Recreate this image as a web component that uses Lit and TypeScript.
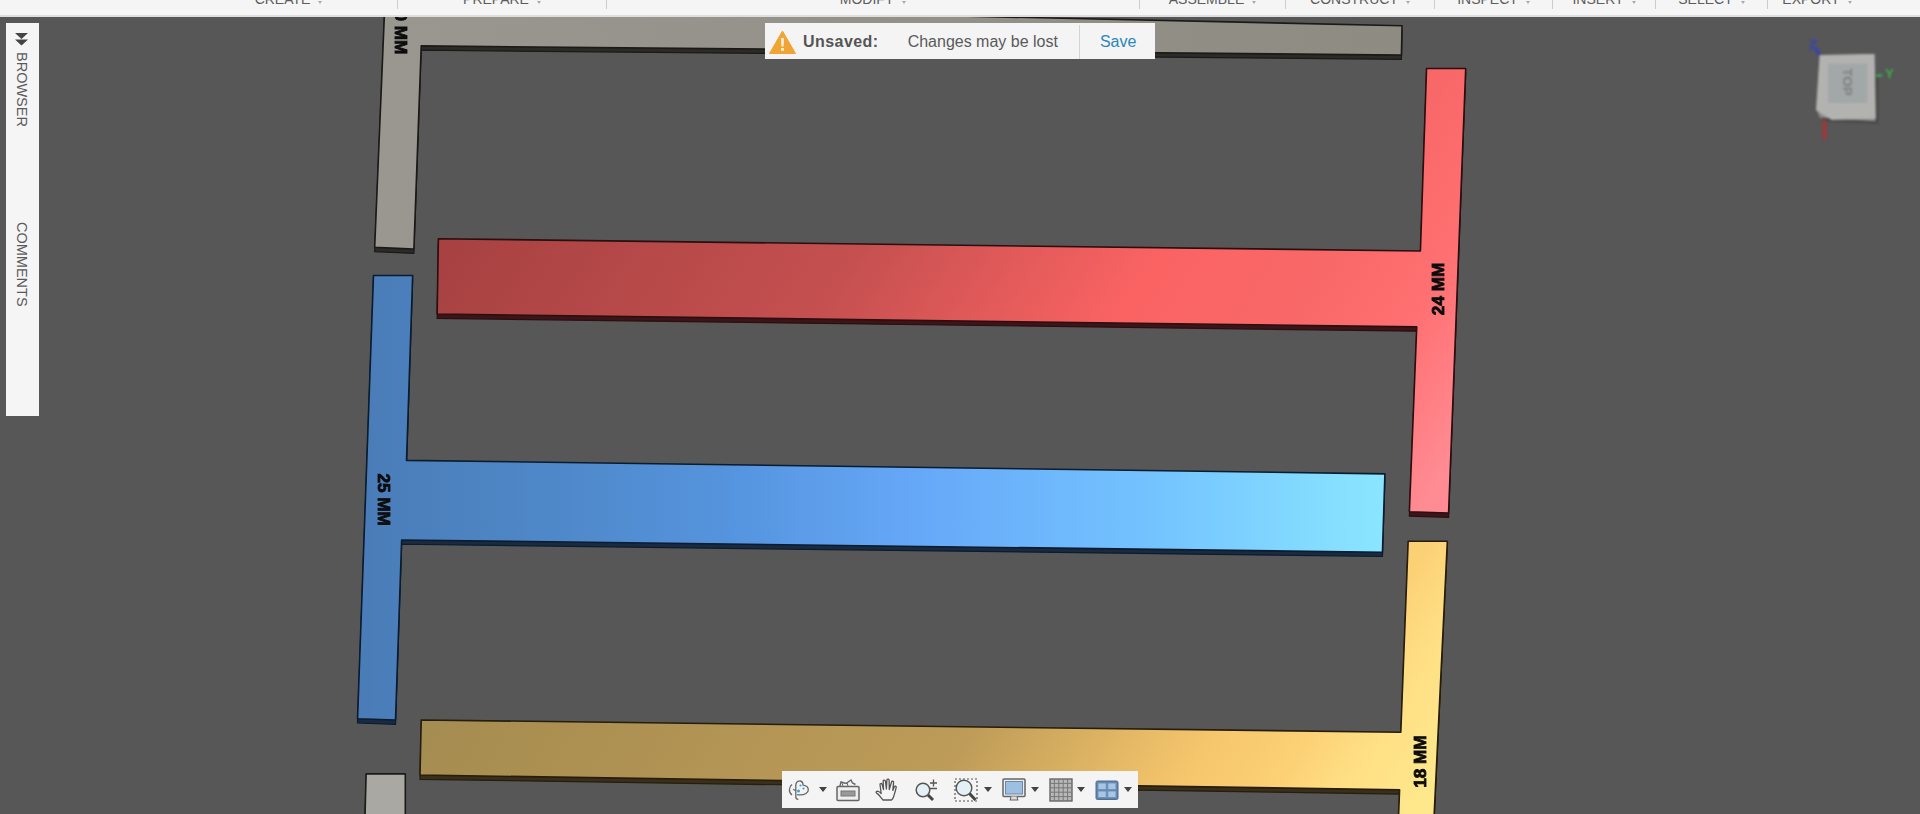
import { LitElement, html, css, svg } from "lit";
import { customElement } from "lit/decorators.js";

const MENUS = [
  { label: "CREATE", w: 218 },
  { label: "PREPARE", w: 209 },
  { label: "MODIFY", w: 533 },
  { label: "ASSEMBLE", w: 146 },
  { label: "CONSTRUCT", w: 149 },
  { label: "INSPECT", w: 118 },
  { label: "INSERT", w: 103 },
  { label: "SELECT", w: 112 },
  { label: "EXPORT", w: 98 },
];

const BARS = [
  { pts: "314,10 640,10 1145,21 1144.5,45 344,37.5 338,203.5 306,202", fill: "url(#gGrey)", edge: "#1b1a18", under: "#2c2b28" },
  { pts: "1165,56 1197,56 1183,419 1151,418 1157,267 357,256.5 358,195 1160,205", fill: "url(#gRed)", edge: "#2c0e10", under: "#3c1519" },
  { pts: "305,225 337,225 332,376 1131,387 1129,451 328,441 323,588 292,587", fill: "url(#gBlue)", edge: "#0b1c30", under: "#1a2b40" },
  { pts: "1150,442 1182,442 1171,670 1142,670 1143,645 343,633 344,588 1144,598", fill: "url(#gYellow)", edge: "#261d0c", under: "#3a2f1b" },
  { pts: "299,632 331,632 331,670 298,670", fill: "#aaa8a2", edge: "#1b1a18", under: "#2c2b28" },
];

const LABELS = [
  { t: "20 MM", x: 327.5, y: 23, r: 90 },
  { t: "24 MM", x: 1174, y: 236, r: -90 },
  { t: "25 MM", x: 314, y: 408, r: 90 },
  { t: "18 MM", x: 1159.5, y: 622, r: -90 },
];

const ICON_ORBIT = html`<svg class="ic" viewBox="0 0 24 24" fill="none" stroke="#666" stroke-width="1.3">
  <path d="M5 6.5C1.6 9 1.4 14.6 5 17" />
  <path d="M12.5 3c3 0 3.6 2.4 3.6 4.2 2.9.4 5.2 2.3 5.2 4.7 0 2.8-3.6 5-8.2 5-1 0-2-.1-3-.3" />
  <path d="M12.5 3C10 3 8.800 5 8.800 7.500v11.200c0 1.700 1.200 2.600 2.600 2.600" />
  <path d="M8.800 12.500c-1.200-.2-2-.7-2.500-1.300" />
  <circle cx="13.500" cy="7.500" r="1.100" fill="#3d9fd6" stroke="none" />
  <circle cx="16.500" cy="10.500" r="1.100" fill="#3d9fd6" stroke="none" />
  <circle cx="11.500" cy="13" r="1.500" fill="#3d9fd6" stroke="none" />
</svg>`;

const ICON_LOOK = html`<svg class="ic" viewBox="0 0 24 24" fill="none" stroke="#666" stroke-width="1.5">
  <rect x="1" y="8.500" width="22" height="14" rx="1" fill="#eee" />
  <rect x="5" y="13" width="14" height="5" fill="#999" stroke="#777" stroke-width="1" />
  <path d="M4 8l1-4 5 1.500 5-3.500 1.500 3 3 1.500" stroke-width="1.400" />
  <path d="M6 5l1 3M11 4.500l1 3.500" stroke-width="1" />
</svg>`;

const ICON_HAND = html`<svg class="ic" viewBox="0 0 24 24" fill="#f6f6f6" stroke="#555" stroke-width="1.300" stroke-linejoin="round">
  <path d="M8 22c-1.600-1.800-3-3.800-4.300-5.200-1-1-2.500-1.600-2.600-2.600 0-1 1.400-1.200 2.500-.7 1 .5 2 1.400 2.600 2.100L5 6.500c-.2-1 1.600-1.500 2-.4l1.500 5.500L8.200 3c0-1.300 2-1.300 2.200 0l1 8 .5-9c.1-1.200 2.100-1.200 2.200 0l.2 9.500L16.500 4c.3-1.200 2.200-.9 2.100.4l-.8 8 1.500-3.700c.5-1 2.200-.5 1.900.7-.6 3.100-1.800 6.600-2.700 9.600-.4 1.500-1 2.200-2 3z" />
</svg>`;

const ICON_ZOOM = html`<svg class="ic z" viewBox="0 0 25 24" fill="none" stroke="#555">
  <circle cx="9" cy="12" r="6.800" fill="#e4f0f6" stroke-width="1.500" />
  <path d="M14 17l5 5" stroke-width="3" stroke="#444" />
  <path d="M16 5h7M19.500 1.500v7M16 10.500h7" stroke-width="1.300" stroke="#555" />
</svg>`;

const ICON_FIT = html`<svg class="ic" viewBox="0 0 24 24" fill="none" stroke="#555">
  <rect x="1" y="1" width="22" height="22" stroke-dasharray="2 2" stroke-width="1.200" />
  <circle cx="10" cy="10" r="7.800" fill="#e4f0f6" stroke-width="1.400" />
  <path d="M15.500 15.500l6 6.500" stroke-width="3" stroke="#444" />
</svg>`;

const ICON_DISPLAY = html`<svg class="ic" viewBox="0 0 24 24" fill="none" stroke="#666">
  <rect x="1" y="1" width="22" height="17.500" rx="1" fill="#eee" stroke-width="1.500" />
  <rect x="3.500" y="3.500" width="17" height="12.500" fill="#9cbfe2" stroke="#6f8aa6" stroke-width="1" />
  <path d="M9 18.500l-.8 3.500h7.600L15 18.500" fill="#ddd" stroke-width="1.100" />
</svg>`;

const ICON_GRID = html`<svg class="ic" viewBox="0 0 24 24" fill="#b8b8b8" stroke="#666">
  <rect x="1" y="1" width="22" height="22" stroke-width="1.400" />
  <path d="M5.400 1v22M9.800 1v22M14.200 1v22M18.600 1v22M1 5.400h22M1 9.800h22M1 14.200h22M1 18.600h22" stroke-width="1" fill="none" stroke="#777" />
</svg>`;

const ICON_VIEWS = html`<svg class="ic" viewBox="0 0 24 24" fill="#a8c6e4" stroke="#6f93b8" stroke-width="1">
  <rect x="1" y="3" width="22" height="18.500" rx="1.500" fill="#5f82a8" stroke="#4f6f92" />
  <rect x="3" y="5" width="8.200" height="6.500" />
  <rect x="12.800" y="5" width="8.200" height="6.500" />
  <rect x="3" y="13" width="8.200" height="6.500" />
  <rect x="12.800" y="13" width="8.200" height="6.500" />
</svg>`;

const ARROW = html`<svg class="arrow" viewBox="0 0 8 5"><path d="M0 0h8L4 5z" fill="#444" /></svg>`;

@customElement("app-root")
export class AppRoot extends LitElement {
  static styles = css`
    :host {
      display: flex;
      flex-direction: column;
      width: 1920px;
      height: 814px;
      overflow: hidden;
      font-family: "Liberation Sans", Arial, sans-serif;
      color: #555;
    }
    .menubar {
      flex: 0 0 15px;
      display: flex;
      padding-left: 180px;
      background: #f5f5f5;
      border-bottom: 2px solid #dedede;
      overflow: hidden;
    }
    .menu {
      display: flex;
      justify-content: center;
      gap: 8px;
      height: 9px;
      border-right: 1px solid #ccc;
      box-sizing: border-box;
      font-size: 14px;
      line-height: 14px;
    }
    .menu:last-child {
      border-right: 0;
    }
    .menu span {
      margin-top: -8px;
      color: #5c5c5c;
    }
    .menu i {
      display: block;
      width: 0;
      height: 0;
      margin-top: 1px;
      border: 2.5px solid transparent;
      border-top: 3px solid #aaa;
    }
    .stage {
      flex: 1;
      position: relative;
      overflow: hidden;
      background: #565756;
    }
    .scene {
      display: block;
      width: 100%;
      height: 100%;
      filter: blur(0.5px);
    }
    .tag {
      font: bold 14px "Liberation Sans", Arial, sans-serif;
      fill: #0c0c0c;
      stroke: #0c0c0c;
      stroke-width: 0.7px;
      text-anchor: middle;
      dominant-baseline: central;
    }
    .cube {
      filter: blur(0.9px);
    }
    .cube text {
      font: bold 11px "Liberation Sans", Arial, sans-serif;
      text-anchor: middle;
      dominant-baseline: central;
    }
    .side {
      position: absolute;
      left: 6px;
      top: 6px;
      width: 33px;
      height: 393px;
      box-sizing: border-box;
      background: #f5f5f5;
      display: flex;
      flex-direction: column;
      align-items: center;
      padding: 10px 2px 0 0;
      font-size: 14.5px;
      color: #5a5a5a;
    }
    .side svg {
      width: 13px;
      height: 13px;
      margin-bottom: 6px;
    }
    .side span {
      writing-mode: vertical-rl;
      line-height: 15px;
    }
    .side .comments {
      margin-top: 95px;
    }
    .notice {
      position: absolute;
      left: 765px;
      top: 6px;
      width: 390px;
      height: 36px;
      box-sizing: border-box;
      background: #f4f4f4;
      display: flex;
      align-items: center;
      padding: 1px 0 0 4px;
      font-size: 16px;
      color: #5a5a5a;
    }
    .notice svg {
      width: 27px;
      height: 24px;
      flex: none;
    }
    .notice b {
      margin-left: 7px;
      letter-spacing: 0.45px;
      color: #555;
    }
    .notice .msg {
      margin-left: 29px;
    }
    .notice .save {
      margin-left: 21px;
      padding-left: 20px;
      height: 34px;
      line-height: 34px;
      border-left: 1px solid #d4d4d4;
      color: #2d86b9;
    }
    .nav {
      position: absolute;
      left: 782px;
      bottom: 6px;
      width: 356px;
      height: 37px;
      box-sizing: border-box;
      background: #f4f4f4;
      display: flex;
      align-items: center;
      padding-left: 5px;
    }
    .ic {
      width: 24px;
      height: 24px;
      flex: none;
    }
    .ic.z {
      width: 25px;
    }
    .arrow {
      width: 8px;
      height: 5px;
      flex: none;
    }
    .pair {
      display: flex;
      align-items: center;
      gap: 4px;
      margin-left: 10px;
    }
    .pair.first {
      margin-left: 0;
      gap: 8px;
    }
    .pair.look {
      margin-left: 9px;
    }
    .pair.solo {
      margin-left: 15px;
    }
    .pair.fit {
      margin-left: 15px;
      gap: 6px;
    }
    .pair.disp {
      gap: 5px;
    }
  `;

  render() {
    return html`
      <div class="menubar">
        ${MENUS.map(
          (m) => html`<div class="menu" style="width:${m.w}px"><span>${m.label}</span><i></i></div>`
        )}
      </div>
      <div class="stage">
        <svg class="scene" viewBox="0 13.900 1568 650.900" preserveAspectRatio="none">
          <defs>
            <linearGradient id="gGrey" gradientUnits="userSpaceOnUse" x1="310" y1="100" x2="1145" y2="30">
              <stop offset="0" stop-color="#9a9790" />
              <stop offset="1" stop-color="#8e8b83" />
            </linearGradient>
            <linearGradient id="gRed" gradientUnits="userSpaceOnUse" x1="358" y1="226" x2="1158" y2="726">
              <stop offset="0" stop-color="#a84242" />
              <stop offset="0.3" stop-color="#c65050" />
              <stop offset="0.52" stop-color="#fb6363" />
              <stop offset="0.645" stop-color="#f96868" />
              <stop offset="0.735" stop-color="#ff7072" />
              <stop offset="0.83" stop-color="#ff8c94" />
            </linearGradient>
            <linearGradient id="gBlue" gradientUnits="userSpaceOnUse" x1="300" y1="0" x2="1130" y2="0">
              <stop offset="0" stop-color="#4a7db8" />
              <stop offset="0.12" stop-color="#4d84c2" />
              <stop offset="0.36" stop-color="#5594de" />
              <stop offset="0.54" stop-color="#66a8f8" />
              <stop offset="0.78" stop-color="#74c4ff" />
              <stop offset="1" stop-color="#8ae6ff" />
            </linearGradient>
            <linearGradient id="gYellow" gradientUnits="userSpaceOnUse" x1="344" y1="600" x2="1144" y2="1100">
              <stop offset="0" stop-color="#a58c50" />
              <stop offset="0.4" stop-color="#bd9b58" />
              <stop offset="0.58" stop-color="#f6c66c" />
              <stop offset="0.65" stop-color="#fcd075" />
              <stop offset="0.7" stop-color="#ffdf84" />
              <stop offset="0.76" stop-color="#ffe78c" />
            </linearGradient>
          </defs>
          ${BARS.map(
            (b) => svg`
              <polygon points=${b.pts} transform="translate(0 3.500)" fill=${b.under} stroke=${b.edge} stroke-width="1" />
              <polygon points=${b.pts} fill=${b.fill} stroke=${b.edge} stroke-width="1.300" stroke-linejoin="round" />
            `
          )}
          ${LABELS.map(
            (l) => svg`<text class="tag" x=${l.x} y=${l.y} transform="rotate(${l.r} ${l.x} ${l.y})">${l.t}</text>`
          )}
          <g class="cube">
            <polygon points="1488,99 1534,101 1534,60 1500,60" fill="#484948" />
            <polygon points="1486,96 1532,99 1530,94 1484,90" fill="#8e8e8c" />
            <polygon points="1486,45 1531,44 1532,97 1496,98 1483,90" fill="#b2b2b0" />
            <rect x="1493" y="52" width="32" height="32" fill="#a2a7a8" />
            <text x="1509" y="67" transform="rotate(90 1509 67)" fill="#7d8082">TOP</text>
            <path d="M1486 45l-3-5" stroke="#3340c0" stroke-width="2.500" fill="none" />
            <text x="1481" y="36" fill="#3340c0">Z</text>
            <path d="M1532 62l5-.5" stroke="#3cae50" stroke-width="2" fill="none" />
            <text x="1543" y="60" fill="#3cae50">Y</text>
            <path d="M1490 98v16" stroke="#a53636" stroke-width="3" fill="none" />
          </g>
        </svg>

        <aside class="side">
          <svg viewBox="0 0 13 13"><path d="M0 0h13L6.500 6zM0 6.500h13L6.500 12.500z" fill="#444" /></svg>
          <span>BROWSER</span>
          <span class="comments">COMMENTS</span>
        </aside>

        <div class="notice">
          <svg viewBox="0 0 27 24">
            <path d="M13.500 1L26.500 23.500H.5z" fill="#f0a434" stroke="#f0a434" stroke-linejoin="round" />
            <path d="M12 8h3l-.4 8.500h-2.200zM12 18h3v2.800h-3z" fill="#fdf0d8" />
          </svg>
          <b>Unsaved:</b>
          <span class="msg">Changes may be lost</span>
          <span class="save">Save</span>
        </div>

        <div class="nav">
          <div class="pair first">${ICON_ORBIT}${ARROW}</div>
          <div class="pair look">${ICON_LOOK}</div>
          <div class="pair solo">${ICON_HAND}</div>
          <div class="pair solo">${ICON_ZOOM}</div>
          <div class="pair fit">${ICON_FIT}${ARROW}</div>
          <div class="pair disp">${ICON_DISPLAY}${ARROW}</div>
          <div class="pair">${ICON_GRID}${ARROW}</div>
          <div class="pair disp">${ICON_VIEWS}${ARROW}</div>
        </div>
      </div>
    `;
  }
}
